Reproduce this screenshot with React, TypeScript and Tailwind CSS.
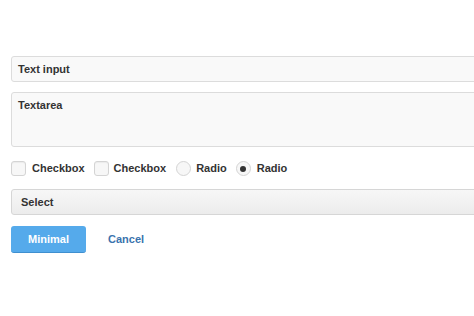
import React from "react";

const font = { fontFamily: '"Liberation Sans", Arial, sans-serif' };

function Box() {
  return <span className="w-[15px] h-[15px] rounded-[3px] border border-[#d4d4d4] bg-[#f7f7f7] shadow-[inset_0_1px_1px_rgba(0,0,0,0.05)]" />;
}

function Radio({ checked }: { checked?: boolean }) {
  return (
    <span className="w-[15px] h-[15px] rounded-full border border-[#d4d4d4] bg-[#f7f7f7] flex items-center justify-center">
      {checked && <span className="w-[6px] h-[6px] rounded-full bg-[#333]" />}
    </span>
  );
}

export default function App() {
  return (
    <div className="w-[474px] h-[316px] bg-white overflow-hidden pt-[56px] pl-[11px] text-[11px] font-bold text-[#333]" style={font}>
      <div className="w-[470px] h-[26px] rounded-[3px] border border-[#dcdcdc] bg-[#f9f9f9] flex items-center px-[6px]">
        Text input
      </div>
      <div className="mt-[10px] w-[470px] h-[55px] rounded-[3px] border border-[#dcdcdc] bg-[#f9f9f9] px-[6px] pt-[4px]">
        Textarea
      </div>
      <div className="mt-[14px] h-[15px] flex items-center">
        <Box />
        <span className="ml-[6px]">Checkbox</span>
        <span className="ml-[9px] flex"><Box /></span>
        <span className="ml-[5px]">Checkbox</span>
        <span className="ml-[10px] flex"><Radio /></span>
        <span className="ml-[5px]">Radio</span>
        <span className="ml-[9px] flex"><Radio checked /></span>
        <span className="ml-[6px]">Radio</span>
      </div>
      <div className="mt-[13px] w-[470px] h-[26px] rounded-[3px] border border-[#d6d6d6] bg-gradient-to-b from-[#f7f7f7] to-[#ececec] flex items-center px-[9px]">
        Select
      </div>
      <div className="mt-[11px] flex items-center">
        <button className="w-[75px] h-[27px] rounded-[3px] bg-[#55aaeb] border-b border-[#3f8fcf] text-white font-bold text-[11px]" style={font}>
          Minimal
        </button>
        <span className="ml-[22px] text-[#3a73ad]">Cancel</span>
      </div>
    </div>
  );
}
